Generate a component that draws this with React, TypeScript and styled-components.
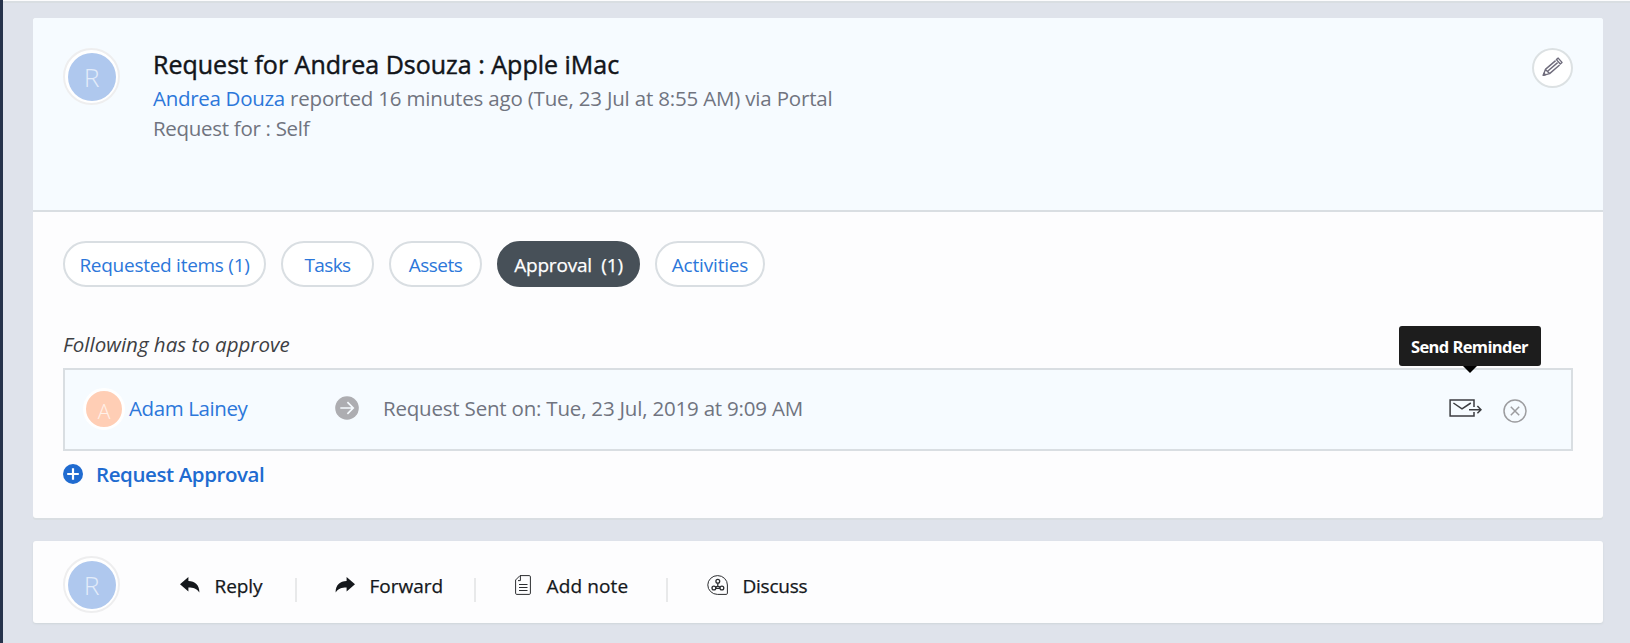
import React from "react";
import styled, { createGlobalStyle, css } from "styled-components";

const GlobalStyle = createGlobalStyle`
  *, *::before, *::after { box-sizing: border-box; }
  body {
    margin: 0;
    background: #dfe3eb;
    font-family: "Open Sans", "Noto Sans", sans-serif;
    overflow: hidden;
  }
  button { font-family: inherit; cursor: pointer; }
`;

const Page = styled.div`
  height: 643px;
  border-left: 3px solid #26334b;
  background: #dfe3eb;
`;

const TopEdge = styled.div`
  height: 3px;
  background: #fcfcfd;
  border-bottom: 2px solid #d9dee2;
`;

const Content = styled.main`
  display: flex;
  flex-direction: column;
  gap: 23px;
  padding: 15px 27px 0 30px;
`;

const Card = styled.section`
  background: #fdfdfe;
  border-radius: 3px;
  box-shadow: 0 2px 0 #d9dee2;
  overflow: hidden;
`;

const TicketHeader = styled.header`
  display: flex;
  align-items: flex-start;
  height: 194px;
  padding: 30px 30px 0;
  background: #f6fbff;
  border-bottom: 2px solid #d9dee2;
`;

const UserAvatar = styled.div`
  flex: none;
  width: 57px;
  height: 57px;
  padding: 2px;
  border: 2px solid #eeeeef;
  border-radius: 50%;
  background: #fff;
  display: grid;
  place-items: center;
`;

const UserInitial = styled.span`
  width: 48px;
  height: 48px;
  border-radius: 50%;
  background: #afc8ee;
  color: #e3ecfa;
  font-size: 26.5px;
  font-weight: 300;
  line-height: 48px;
  text-align: center;
`;

const Summary = styled.div`
  flex: 1;
  margin-left: 33px;
`;

const Title = styled.h1`
  margin: 0;
  color: #12151a;
  font-size: 25px;
  font-weight: 500;
  line-height: 33px;
  -webkit-text-stroke: 0.45px currentColor;
  padding-bottom: 2px;
`;

const Meta = styled.p<{ $tracking: number }>`
  margin: 0;
  color: #70747f;
  font-size: 20.5px;
  line-height: 30px;
  letter-spacing: ${(p) => p.$tracking}px;
`;

const Link = styled.a<{ $tracking: number }>`
  color: #2c77da;
  font-size: 20.5px;
  letter-spacing: ${(p) => p.$tracking}px;
  text-decoration: none;
`;

const EditButton = styled.button`
  display: grid;
  place-items: center;
  width: 41px;
  height: 40px;
  padding: 0 1px 2px 0;
  border: 2px solid #dce1e3;
  border-radius: 50%;
  background: #fff;
`;

const TicketBody = styled.div`
  height: 306px;
  padding: 29px 30px 0;
`;

const Tabs = styled.nav`
  display: flex;
  gap: 15px;
`;

const Tab = styled.button<{ $width: number; $active?: boolean; $tracking: number }>`
  width: ${(p) => p.$width}px;
  height: 46px;
  padding: 2px 0 0;
  border: 2px solid #d9dee2;
  border-radius: 23px;
  background: #fff;
  color: #2c77da;
  font-size: 19px;
  line-height: 40px;
  letter-spacing: ${(p) => p.$tracking}px;
  white-space: pre;
  ${(p) =>
    p.$active &&
    css`
      border-color: #475058;
      background: #475058;
      color: #fff;
      -webkit-text-stroke: 0.25px currentColor;
    `}
`;

const Caption = styled.p`
  margin: 43px 0 0;
  color: #3d3f44;
  font-size: 20.5px;
  font-style: italic;
  line-height: 28px;
`;

const ApprovalRow = styled.div`
  display: flex;
  align-items: center;
  height: 83px;
  margin-top: 10px;
  padding: 0 44px 3px 18px;
  border: 2px solid #d9dee2;
  background: #f6fbff;
`;

const ApproverInitial = styled.span`
  flex: none;
  width: 42px;
  height: 42px;
  margin-top: 2px;
  border: 3px solid #fff;
  border-radius: 50%;
  background: #ffceb5;
  color: #fff1e9;
  font-size: 21px;
  font-weight: 300;
  line-height: 41px;
  text-align: center;
`;

const Approver = styled.div`
  width: 206px;
  margin-left: 4px;
  padding-top: 2px;
  line-height: 30px;
`;

const RowIcon = styled.span`
  display: flex;
  flex: none;
  margin-right: 24px;
`;

const Sent = styled(Meta)`
  flex: 1;
`;

const RowActions = styled.div`
  display: flex;
  align-items: center;
  gap: 21px;
`;

const IconButton = styled.button<{ $drop?: number }>`
  position: relative;
  display: flex;
  margin-top: ${(p) => p.$drop ?? 0}px;
  padding: 0;
  border: 0;
  background: none;
`;

const Tooltip = styled.span`
  position: absolute;
  left: 50%;
  bottom: calc(100% + 33px);
  width: 142px;
  height: 40px;
  margin-left: -67px;
  border-radius: 3px;
  background: #1d1d1d;
  color: #fff;
  font-size: 16.5px;
  font-weight: 700;
  letter-spacing: -0.6px;
  line-height: 41px;
  text-align: center;
  &::after {
    content: "";
    position: absolute;
    left: 64px;
    top: 40px;
    border: 7.5px solid transparent;
    border-top-color: #000;
    border-bottom: 0;
  }
`;

const RequestApproval = styled.button`
  display: flex;
  align-items: center;
  gap: 13px;
  margin-top: 8px;
  padding: 0;
  border: 0;
  background: none;
  color: #206bd0;
  font-size: 20.5px;
  font-weight: 600;
  line-height: 30px;
  letter-spacing: -0.41px;
`;

const ReplyBar = styled(Card)`
  display: flex;
  align-items: flex-start;
  height: 82px;
  padding: 15px 30px 0;
  box-shadow: 0 1px 2px #cfd5da;
`;

const Actions = styled.div`
  display: flex;
  margin-left: 60px;
  padding-top: 16px;
`;

const Action = styled.button<{ $width: number; $gap: number; $tracking: number }>`
  display: flex;
  align-items: center;
  gap: ${(p) => p.$gap}px;
  width: ${(p) => p.$width}px;
  height: 26px;
  padding: 0;
  border: 0;
  background: none;
  color: #15181c;
  font-size: 19px;
  line-height: 26px;
  letter-spacing: ${(p) => p.$tracking}px;
  white-space: nowrap;
`;

const ActionLabel = styled.span`
  padding-top: 1px;
  -webkit-text-stroke: 0.25px currentColor;
`;

const Divider = styled.span<{ $space: number }>`
  width: 2px;
  height: 24px;
  margin: 6px ${(p) => p.$space}px 0 0;
  background: #e8e9ea;
`;

const Pencil = () => (
  <svg width="21" height="20" viewBox="0 0 21 20" fill="none" stroke="#6f6c7c" strokeWidth="1.4" strokeLinejoin="round">
    <path d="M1.2 18.4 3.4 12.4 13.6 3.6M1.2 18.4 7.6 16.6 17.6 8M3.4 12.4 7.6 16.6M5.6 14.2 15.6 5.6" />
    <path d="M14.4 2.6 16.2 1.1 20 5.4 18.3 7z" />
    <path d="M1.2 18.4 2 16.2 3.5 17.7z" fill="#6f6c7c" />
  </svg>
);

const SentArrow = () => (
  <svg width="24" height="24" viewBox="0 0 24 24" fill="none">
    <circle cx="12" cy="12" r="11.8" fill="#adadb1" />
    <path d="M5.3 12H18M12.4 6.2 18.2 12l-5.8 5.8" stroke="#f6fbff" strokeWidth="1.7" />
  </svg>
);

const SendMail = () => (
  <svg width="33" height="18" viewBox="0 0 33 18" fill="none" stroke="#3c3d41" strokeWidth="1.5">
    <path d="M25 8V1.1H1.1v15.8H25V13" />
    <path d="M4.4 4 13 9.8 21.8 4" />
    <path d="M20 10.7h11.8M28.4 7l3.6 3.7-3.6 3.6" />
  </svg>
);

const CancelCircle = () => (
  <svg width="24" height="24" viewBox="0 0 24 24" fill="none" stroke="#9c9c9f" strokeWidth="1.5">
    <circle cx="12" cy="12" r="11" />
    <path d="m7.8 7.8 8.4 8.4M16.2 7.8l-8.4 8.4" />
  </svg>
);

const PlusCircle = () => (
  <svg width="20" height="20" viewBox="0 0 20 20">
    <circle cx="10" cy="10" r="10" fill="#206bd0" />
    <path d="M4.2 10h11.6M10 4.2v11.6" stroke="#fff" strokeWidth="2.2" />
  </svg>
);

const ReplyArrow = ({ flip = false }: { flip?: boolean }) => (
  <svg width="20" height="16" viewBox="0 0 20 16">
    <path
      d="M0 7.2 8.4 0v4.1C15 4.1 19.4 8 19.4 15.6 16.8 11.6 13.4 10.6 8.4 10.6v4z"
      fill="#15181c"
      transform={flip ? "translate(20 0) scale(-1 1)" : undefined}
    />
  </svg>
);

const NotePage = () => (
  <svg width="16" height="20" viewBox="0 0 16 20" fill="none" stroke="#2b2d30" strokeWidth="1">
    <path d="M5 .6H14.2Q15.4.6 15.4 1.8V18.2Q15.4 19.4 14.2 19.4H1.8Q.6 19.4.6 18.2V5z" />
    <path d="M5.4.8V5.6H3" />
    <path d="M4 9.5h8.5M4 12.5h8.5M4 15.5h8.5" strokeWidth="1.1" />
  </svg>
);

const DiscussBubble = () => (
  <svg width="21" height="20" viewBox="0 0 21 20" fill="none" stroke="#2b2d30">
    <path d="M20.4 10V18.2Q20.4 19.4 19.2 19.4H10.4A9.8 9.4 0 1 1 20.4 10z" />
    <g strokeWidth="1.3">
      <circle cx="10.8" cy="6.3" r="1.9" />
      <circle cx="6.9" cy="13" r="1.9" />
      <circle cx="14.9" cy="13" r="1.9" />
      <path d="M10.8 8.2v2.9M8.6 12.1l2.2-1 2.3 1M8.8 13.4h4.2" />
    </g>
  </svg>
);

export default function App() {
  return (
    <Page>
      <GlobalStyle />
      <TopEdge />
      <Content>
        <Card>
          <TicketHeader>
            <UserAvatar><UserInitial>R</UserInitial></UserAvatar>
            <Summary>
              <Title>Request for Andrea Dsouza : Apple iMac</Title>
              <Meta $tracking={-0.18}>
                <Link href="#" $tracking={-0.3}>Andrea Douza</Link> reported 16 minutes ago (Tue, 23 Jul at 8:55 AM) via Portal
              </Meta>
              <Meta $tracking={-0.3}>Request for : Self</Meta>
            </Summary>
            <EditButton aria-label="Edit"><Pencil /></EditButton>
          </TicketHeader>
          <TicketBody>
            <Tabs>
              <Tab $width={203} $tracking={-0.27}>Requested items (1)</Tab>
              <Tab $width={93} $tracking={-0.6}>Tasks</Tab>
              <Tab $width={93} $tracking={-0.5}>Assets</Tab>
              <Tab $width={143} $tracking={-0.2} $active>{"Approval  (1)"}</Tab>
              <Tab $width={110} $tracking={-0.18}>Activities</Tab>
            </Tabs>
            <Caption>Following has to approve</Caption>
            <ApprovalRow>
              <ApproverInitial>A</ApproverInitial>
              <Approver><Link href="#" $tracking={-0.4}>Adam Lainey</Link></Approver>
              <RowIcon><SentArrow /></RowIcon>
              <Sent $tracking={-0.2}>Request Sent on: Tue, 23 Jul, 2019 at 9:09 AM</Sent>
              <RowActions>
                <IconButton aria-label="Send reminder">
                  <SendMail />
                  <Tooltip>Send Reminder</Tooltip>
                </IconButton>
                <IconButton aria-label="Cancel" $drop={5}><CancelCircle /></IconButton>
              </RowActions>
            </ApprovalRow>
            <RequestApproval><PlusCircle />Request Approval</RequestApproval>
          </TicketBody>
        </Card>
        <ReplyBar>
          <UserAvatar><UserInitial>R</UserInitial></UserAvatar>
          <Actions>
            <Action $width={115} $gap={14.5} $tracking={-0.05}><ReplyArrow /><ActionLabel>Reply</ActionLabel></Action>
            <Divider $space={38} />
            <Action $width={139} $gap={14.5} $tracking={0}><ReplyArrow flip /><ActionLabel>Forward</ActionLabel></Action>
            <Divider $space={39} />
            <Action $width={151} $gap={15.5} $tracking={0.12}><NotePage /><ActionLabel>Add note</ActionLabel></Action>
            <Divider $space={39} />
            <Action $width={110} $gap={14.5} $tracking={-0.25}><DiscussBubble /><ActionLabel>Discuss</ActionLabel></Action>
          </Actions>
        </ReplyBar>
      </Content>
    </Page>
  );
}
